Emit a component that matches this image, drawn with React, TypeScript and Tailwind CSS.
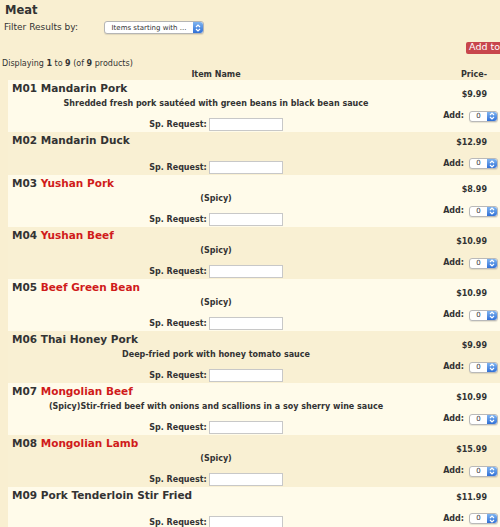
import React from "react"

type Item = {
  code: string
  name: string
  spicy?: boolean
  desc?: string
  price: string
}

const items: Item[] = [
  { code: "M01", name: "Mandarin Pork", desc: "Shredded fresh pork sautéed with green beans in black bean sauce", price: "$9.99" },
  { code: "M02", name: "Mandarin Duck", price: "$12.99" },
  { code: "M03", name: "Yushan Pork", spicy: true, desc: "(Spicy)", price: "$8.99" },
  { code: "M04", name: "Yushan Beef", spicy: true, desc: "(Spicy)", price: "$10.99" },
  { code: "M05", name: "Beef Green Bean", spicy: true, desc: "(Spicy)", price: "$10.99" },
  { code: "M06", name: "Thai Honey Pork", desc: "Deep-fried pork with honey tomato sauce", price: "$9.99" },
  { code: "M07", name: "Mongolian Beef", spicy: true, desc: "(Spicy)Stir-fried beef with onions and scallions in a soy sherry wine sauce", price: "$10.99" },
  { code: "M08", name: "Mongolian Lamb", spicy: true, desc: "(Spicy)", price: "$15.99" },
  { code: "M09", name: "Pork Tenderloin Stir Fried", price: "$11.99" },
]

function Arrows() {
  return (
    <span className="flex h-full w-[10px] items-center justify-center rounded-r-[3px] bg-gradient-to-b from-[#7fb4f0] to-[#2f6fd6]">
      <svg width="6" height="8" viewBox="0 0 6 8">
        <path d="M1 3 L3 1 L5 3" fill="none" stroke="#fff" strokeWidth="1.2" />
        <path d="M1 5 L3 7 L5 5" fill="none" stroke="#fff" strokeWidth="1.2" />
      </svg>
    </span>
  )
}

function QtySelect() {
  return (
    <span className="flex h-[11px] w-[29px] items-stretch rounded-[3px] border border-[#b9b9b9] bg-white shadow-[0_1px_1px_rgba(0,0,0,0.1)]">
      <span className="flex flex-1 items-center justify-center text-[7px] font-normal text-[#333]">0</span>
      <Arrows />
    </span>
  )
}

function Row({ item, odd }: { item: Item; odd: boolean }) {
  return (
    <div className={`flex ${odd ? "bg-[#fffbea]" : "bg-[#f9f0d3]"}`}>
      <div className="flex w-[416px] flex-col">
        <div className="flex h-[17px] items-center pl-1 pt-[2px] text-[10.5px] font-bold text-[#333]">
          <span>{item.code}&nbsp;</span>
          <span className={item.spicy ? "text-[#d01b1b]" : ""}>{item.name}</span>
        </div>
        {item.desc ? (
          <div className="flex h-[14px] items-center justify-center text-[8px] font-bold text-[#333]">{item.desc}</div>
        ) : (
          <div className="h-[5px]" />
        )}
        <div className="mt-[7px] flex h-[14px] items-center justify-center gap-[2px] text-[8px] font-bold text-[#333]">
          <span>Sp. Request:</span>
          <span className="h-[13px] w-[74px] border border-[#c8c8c8] bg-white" />
        </div>
      </div>
      <div className="flex flex-1 flex-col justify-center gap-[9px]">
        <div className="pr-[13px] text-right text-[8px] font-bold text-[#333]">{item.price}</div>
        <div className="flex items-center justify-end gap-[5px] pr-[2px] text-[8px] font-bold text-[#333]">
          <span>Add:</span>
          <QtySelect />
        </div>
      </div>
    </div>
  )
}

export default function App() {
  return (
    <div className="h-[527px] w-[500px] overflow-hidden bg-[#f9efd1] font-['DejaVu_Sans',sans-serif] text-[#333]">
      <div className="px-[5px] pt-[1px] text-[11.5px] font-bold leading-[18px]">Meat</div>
      <div className="mt-[2px] flex items-center pl-1">
        <span className="w-[100px] text-[9px]">Filter Results by:</span>
        <span className="flex h-[13px] w-[100px] items-stretch rounded-[3px] border border-[#b5b5b5] bg-white shadow-[0_1px_1px_rgba(0,0,0,0.1)]">
          <span className="flex flex-1 items-center justify-center text-[7px]">Items starting with ...</span>
          <Arrows />
        </span>
      </div>
      <div className="mt-[7px] flex justify-end">
        <span className="flex h-[12px] w-[34px] items-center justify-end overflow-hidden whitespace-nowrap rounded-l-[2px] bg-[#c8464c] text-[9.5px] text-white">
          Add to
        </span>
      </div>
      <div className="mt-[4px] pl-[2px] text-[8px] leading-[12px]">
        Displaying <b>1</b> to <b>9</b> (of <b>9</b> products)
      </div>
      <div className="flex h-[10px] items-center text-[8px] font-bold">
        <span className="w-[432px] text-center">Item Name</span>
        <span className="w-[55px] text-right">Price-</span>
      </div>
      <div className="ml-[8px] flex flex-col">
        {items.map((it, i) => (
          <Row key={it.code} item={it} odd={i % 2 === 0} />
        ))}
      </div>
    </div>
  )
}
